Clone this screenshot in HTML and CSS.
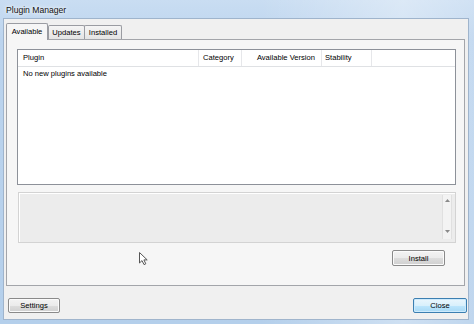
FILE: index.html
```html
<!DOCTYPE html>
<html>
<head>
<meta charset="utf-8">
<link rel="stylesheet" href="styles.css">
</head>
<body>
<div class="window">
  <div class="titlebar"><span class="title">Plugin Manager</span></div>
  <div class="client">
    <div class="tabs">
      <div class="tab active t-avail">Available</div>
      <div class="tab t-upd">Updates</div>
      <div class="tab t-inst">Installed</div>
    </div>
    <div class="panel">
      <div class="list">
        <div class="list-head">
          <div class="col c1">Plugin</div>
          <div class="col c2">Category</div>
          <div class="col c3">Available Version</div>
          <div class="col c4">Stability</div>
        </div>
        <div class="row">No new plugins available</div>
      </div>
      <div class="details">
        <div class="scroll">
          <svg class="arr" width="5" height="3" viewBox="0 0 5 3"><path d="M0 3 L2.5 0 L5 3 Z" fill="#8a8a8a"/></svg>
          <svg class="arr" width="5" height="3" viewBox="0 0 5 3"><path d="M0 0 L2.5 3 L5 0 Z" fill="#8a8a8a"/></svg>
        </div>
      </div>
      <div class="actions"><button class="btn install">Install</button></div>
    </div>
    <div class="footer">
      <button class="btn settings">Settings</button>
      <button class="btn default close">Close</button>
    </div>
  </div>
  <svg class="cursor" width="11" height="15" viewBox="0 0 11 15">
    <path d="M1.5 1.5 L1.5 12 L4 9.6 L6 13.6 L7.8 12.8 L5.9 8.9 L9.2 8.9 Z" fill="#fff" stroke="#555" stroke-width="1" stroke-linejoin="round"/>
  </svg>
</div>
</body>
</html>
```
FILE: styles.css
```css
* { box-sizing: border-box; }
html, body { margin: 0; padding: 0; }
body {
  width: 474px;
  height: 324px;
  overflow: hidden;
  font-family: "Liberation Sans", Arial, sans-serif;
  font-size: 7.6px;
  color: #000000;
}
.window {
  position: relative;
  width: 474px;
  height: 324px;
  display: flex;
  flex-direction: column;
  background:
    linear-gradient(to right, rgba(255,255,255,0) 55%, rgba(255,255,255,0.35) 85%, rgba(255,255,255,0.15) 100%),
    linear-gradient(to bottom, #c9ddf2 0px, #bcd4ee 40px, #b4cfeb 324px);
}
.titlebar {
  height: 18px;
  padding: 2px 0 0 6px;
  line-height: 16px;
  font-size: 8.6px;
  color: #111111;
}
.title { text-shadow: 0 0 6px #ffffff, 0 0 3px #ffffff; }
.client {
  flex: 1;
  margin: 0 5px 4px 3px;
  background: #f0f0f0;
  border: 1px solid #9fb4cc;
  display: flex;
  flex-direction: column;
}
.tabs {
  display: flex;
  align-items: flex-end;
  padding: 2px 0 0 2px;
  height: 20px;
}
.tab {
  height: 14px;
  border: 1px solid #9a9ca2;
  border-bottom: none;
  border-radius: 2px 2px 0 0;
  background: linear-gradient(to bottom, #f5f5f5, #e4e4e4);
  text-align: center;
  line-height: 13px;
  margin-left: -1px;
}
.tab.active {
  height: 17px;
  line-height: 16px;
  background: #f6f6f6;
  position: relative;
  z-index: 1;
  margin-bottom: -1px;
  margin-left: 0;
}
.t-avail { width: 42px; }
.t-upd { width: 37px; margin-left: 0; }
.t-inst { width: 38px; }
.panel {
  height: 247px;
  margin: 0 3px 0 2px;
  border: 1px solid #a3a5aa;
  background: #f6f6f6;
  padding: 9px 8px 0 10px;
  display: flex;
  flex-direction: column;
}
.list {
  height: 136px;
  border: 1px solid #8d9199;
  background: #ffffff;
}
.list-head {
  display: flex;
  height: 17px;
  border-bottom: 1px solid #dfe1e4;
  line-height: 16px;
}
.col {
  border-right: 1px solid #e6e7ea;
  white-space: nowrap;
}
.c1 { width: 181px; padding-left: 5px; }
.c2 { width: 43px; padding-left: 4px; }
.c3 { width: 80px; text-align: right; padding-right: 6px; }
.c4 { width: 50px; padding-left: 3px; }
.row {
  height: 14px;
  line-height: 14px;
  padding-left: 5px;
}
.details {
  height: 51px;
  margin-top: 7px;
  margin-left: 1px;
  border: 1px solid #d3d3d3;
  box-shadow: inset 1px 1px 0 #ffffff;
  background: #ececec;
  display: flex;
  justify-content: flex-end;
  padding: 2px 3px 3px 0;
}
.scroll {
  width: 10px;
  border-left: 1px solid #e0e0e0;
  border-right: 1px solid #e0e0e0;
  background: #f3f3f3;
  display: flex;
  flex-direction: column;
  justify-content: space-between;
  align-items: center;
  padding: 4px 0 6px;
}
.arr { display: block; }
.actions {
  display: flex;
  justify-content: flex-end;
  padding-right: 11px;
  margin-top: 7px;
}
.btn {
  font-family: "Liberation Sans", Arial, sans-serif;
  font-size: 7.6px;
  color: #000000;
  height: 15px;
  padding: 0;
  border: 1px solid #8a8a8a;
  border-radius: 2px;
  background: linear-gradient(to bottom, #f3f3f3 0%, #ebebeb 50%, #dddddd 51%, #d0d0d0 100%);
  box-shadow: inset 0 0 0 1px #fbfbfb;
  line-height: 13px;
}
.install { width: 53px; height: 16px; }
.footer {
  display: flex;
  justify-content: space-between;
  padding: 12px 1px 0 4px;
}
.settings { width: 52px; }
.close { width: 54px; }
.btn.default {
  border-color: #3c7fb1;
  background: linear-gradient(to bottom, #eaf6fd 0%, #d9f0fc 50%, #bee6fd 51%, #a7d9f5 100%);
  box-shadow: inset 0 0 0 1px #cdeafc;
}
.cursor {
  position: absolute;
  left: 138px;
  top: 251px;
}
```
